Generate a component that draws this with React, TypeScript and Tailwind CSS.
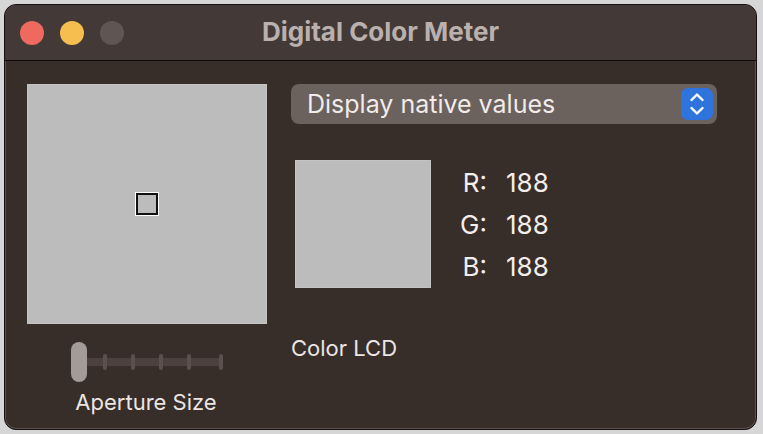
import React from 'react';

const font = { fontFamily: 'Inter, "Noto Sans", sans-serif' };

function TrafficLights() {
  return (
    <div className="absolute left-[15px] top-[16px] flex gap-[16px]">
      <span className="w-[24px] h-[24px] rounded-full bg-[#ee6a5f]" />
      <span className="w-[24px] h-[24px] rounded-full bg-[#f5be4f]" />
      <span className="w-[24px] h-[24px] rounded-full bg-[#5f5653]" />
    </div>
  );
}

function Stepper() {
  return (
    <div className="w-[32px] h-[32px] rounded-[7px] bg-[#2f74dc] flex items-center justify-center">
      <svg width="32" height="32" viewBox="0 0 32 32" fill="none" stroke="white" strokeWidth="2.4" strokeLinecap="round" strokeLinejoin="round">
        <path d="M10.5 12 L16 6.5 L21.5 12" />
        <path d="M10.5 20 L16 25.5 L21.5 20" />
      </svg>
    </div>
  );
}

function ApertureSlider() {
  return (
    <div className="relative h-[40px] w-[152px] ml-[44px]">
      <div className="absolute left-[14px] top-[16px] h-[8px] w-[136px] bg-[#4c413e]" />
      {[105, 133, 161, 189, 221].map((x) => (
        <div key={x} className="absolute top-[12px] h-[16px] w-[4px] rounded-[2px] bg-[#5b504c]" style={{ left: x - 71 - 2 }} />
      ))}
      <div className="absolute left-0 top-0 h-[40px] w-[16px] rounded-full bg-[#a29b98]" />
    </div>
  );
}

export default function App() {
  const rows = [
    { k: 'R:', v: '188' },
    { k: 'G:', v: '188' },
    { k: 'B:', v: '188' },
  ];
  return (
    <div className="w-[763px] h-[434px] bg-[#d6d6d6] pt-[4px] pl-[4px]" style={font}>
      <div className="relative w-[753px] h-[426px] rounded-[12px] overflow-hidden bg-[#372d29] border border-[#141010] shadow-[inset_0_0_0_1px_#5a5150]">
        {/* Title bar */}
        <div className="relative h-[56px] bg-[#433a37] border-b border-[#0e0a09] flex items-center justify-center">
          <TrafficLights />
          <span className="text-[26px] leading-[32px] font-bold text-[#bab0ad] mt-[-1px]">Digital Color Meter</span>
        </div>

        {/* Body */}
        <div className="flex pl-[22px] pt-[23px] gap-[24px]">
          <div className="w-[240px] flex flex-col">
            <div className="w-[240px] h-[240px] bg-[#bcbcbc] border border-[#c3c3c3] flex items-center justify-center">
              <div className="w-[24px] h-[24px] border border-white flex">
                <div className="flex-1 border-2 border-[#111111] bg-[#bcbcbc]" />
              </div>
            </div>
            <div className="mt-[18px]">
              <ApertureSlider />
            </div>
            <div className="mt-[6px] text-center text-[22px] leading-[28px] text-[#ebe5e3] pr-[2px]">Aperture Size</div>
          </div>

          <div className="flex flex-col">
            <div className="w-[426px] h-[40px] rounded-[8px] bg-[#6b615d] flex items-center justify-between pl-[16px] pr-[4px]">
              <span className="text-[25px] leading-[30px] text-[#f1ebe9]">Display native values</span>
              <Stepper />
            </div>

            <div className="flex mt-[36px] ml-[4px]">
              <div className="w-[136px] h-[128px] bg-[#bcbcbc] border border-[#c3c3c3]" />
              <div className="flex flex-col pt-[1px]">
                {rows.map((r) => (
                  <div key={r.k} className="h-[42px] flex items-center text-[26px] text-[#f3eeec]">
                    <span className="w-[56px] text-right">{r.k}</span>
                    <span className="ml-[19px]">{r.v}</span>
                  </div>
                ))}
              </div>
            </div>

            <div className="mt-[47px] text-[22px] leading-[26px] text-[#ebe5e3]">Color LCD</div>
          </div>
        </div>
      </div>
    </div>
  );
}
